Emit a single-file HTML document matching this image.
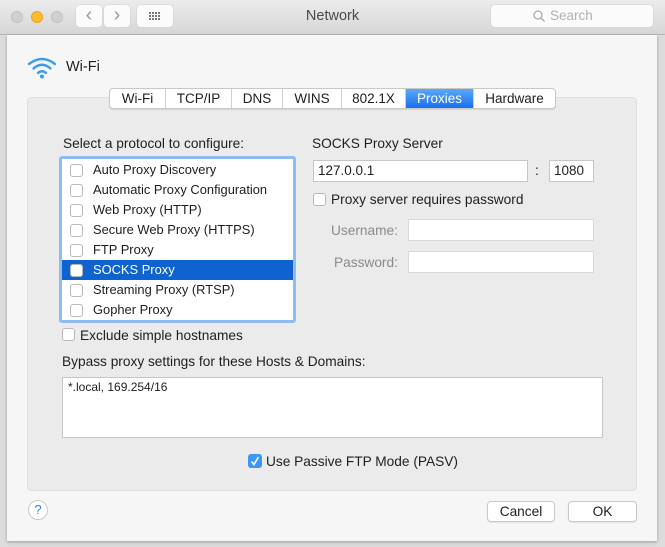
<!DOCTYPE html>
<html><head><meta charset="utf-8"><style>
*{box-sizing:border-box;margin:0;padding:0}
body{width:665px;height:547px;overflow:hidden;background:#dcdcdc;font-family:"Liberation Sans",Arial,sans-serif;font-size:13.7px;color:#1e1e1e;position:relative}
.a{position:absolute}
.tb{left:0;top:0;width:665px;height:35px;background:linear-gradient(#ececec,#d6d6d6);border-bottom:1px solid #b8b8b8}
.dot{width:12px;height:12px;border-radius:50%;top:11px;background:#d0d0d0;border:1px solid #c0c0c0}
.btn{background:#fbfbfb;border-radius:4px;height:22px;top:5px;box-shadow:0 0 0 .5px #d0d0d0}
.sheet{left:7px;top:35px;width:650px;height:506px;background:#f6f6f6;box-shadow:0 1px 3px rgba(0,0,0,.3)}
.panel{left:27px;top:97px;width:610px;height:394px;background:#ebebeb;border:1px solid #e0e0e0;border-radius:4px}
.tabs{left:109px;top:88px;height:21px;display:flex;background:#fff;border:1px solid #c8c8c8;border-radius:4px;box-shadow:0 1px 1px rgba(0,0,0,.1);overflow:hidden}
.tabs div{height:19px;line-height:19px;text-align:center;border-right:1px solid #d0d0d0;font-size:13.5px}
.tabs .s{background:linear-gradient(#5aa8f8,#1a6ff0);color:#fff}
.list{left:59px;top:156px;width:237px;height:167px;background:#fff;border:3px solid #8ebcf0;border-radius:3px}
.row{position:absolute;left:0;width:231px;height:20px;line-height:20px;padding-left:31px;font-size:12.9px}
.cb{position:absolute;width:13px;height:13px;border:1px solid #b8b8b8;border-radius:3px;background:#fff}
.row .cb{left:8px;top:4px}
.sel{background:#0e63d0;color:#fff}
.inp{background:#fff;border:1px solid #c6c6c6;height:22px;line-height:20px;padding-left:4px;font-size:13.5px}
.pb{background:#fff;border:1px solid #c8c8c8;border-radius:4px;height:21px;line-height:19px;text-align:center;box-shadow:0 1px 1px rgba(0,0,0,.08)}
</style></head><body>
<div class="a tb"></div>
<div class="a dot" style="left:11px"></div>
<div class="a dot" style="left:31px;background:#fdbb2e;border-color:#e9a420"></div>
<div class="a dot" style="left:51px"></div>
<div class="a btn" style="left:76px;width:26px;color:#999;text-align:center;line-height:20px;font-size:20px">&#8249;</div>
<div class="a btn" style="left:104px;width:26px;color:#999;text-align:center;line-height:20px;font-size:20px">&#8250;</div>
<div class="a btn" style="left:137px;width:36px"><svg width="36" height="22"><g fill="#777"><rect x="12" y="7" width="2" height="2"/><rect x="15" y="7" width="2" height="2"/><rect x="18" y="7" width="2" height="2"/><rect x="21" y="7" width="2" height="2"/><rect x="12" y="10" width="2" height="2"/><rect x="15" y="10" width="2" height="2"/><rect x="18" y="10" width="2" height="2"/><rect x="21" y="10" width="2" height="2"/><rect x="12" y="13" width="2" height="2"/><rect x="15" y="13" width="2" height="2"/><rect x="18" y="13" width="2" height="2"/><rect x="21" y="13" width="2" height="2"/></g></svg></div>
<div class="a" style="left:0;width:665px;top:8px;text-align:center;color:#4a4a4a;font-size:14.5px">Network</div>
<div class="a btn" style="left:491px;width:162px;color:#b0b0b0;font-size:13.5px;line-height:22px;padding-left:42px"><svg class="a" style="left:42px;top:5px" width="12" height="12"><circle cx="5" cy="5" r="4" fill="none" stroke="#aaa" stroke-width="1.3"/><line x1="8" y1="8" x2="11.5" y2="11.5" stroke="#aaa" stroke-width="1.3"/></svg><span style="margin-left:17px">Search</span></div>

<div class="a sheet"></div>
<svg class="a" style="left:26px;top:55px" width="34" height="25"><g fill="none" stroke="#3a9bf0" stroke-width="2.4" stroke-linecap="round"><path d="M3 9 Q16 -1 29 9"/><path d="M7.5 13.5 Q16 6 24.5 13.5"/><path d="M12 18 Q16 14.5 20 18"/></g><circle cx="16" cy="21.5" r="2" fill="#3a9bf0"/></svg>
<div class="a" style="left:66px;top:59px;font-size:14.5px">Wi-Fi</div>
<div class="a panel"></div>
<div class="a tabs">
<div style="width:56px">Wi-Fi</div><div style="width:66px">TCP/IP</div><div style="width:51px">DNS</div><div style="width:59px">WINS</div><div style="width:64px">802.1X</div><div class="s" style="width:68px">Proxies</div><div style="width:81px;border-right:0">Hardware</div>
</div>

<div class="a" style="left:63px;top:136px">Select a protocol to configure:</div>
<div class="a list">
<div class="row" style="top:1px"><span class="cb"></span>Auto Proxy Discovery</div>
<div class="row" style="top:21px"><span class="cb"></span>Automatic Proxy Configuration</div>
<div class="row" style="top:41px"><span class="cb"></span>Web Proxy (HTTP)</div>
<div class="row" style="top:61px"><span class="cb"></span>Secure Web Proxy (HTTPS)</div>
<div class="row" style="top:81px"><span class="cb"></span>FTP Proxy</div>
<div class="row sel" style="top:101px"><span class="cb"></span>SOCKS Proxy</div>
<div class="row" style="top:121px"><span class="cb"></span>Streaming Proxy (RTSP)</div>
<div class="row" style="top:141px"><span class="cb"></span>Gopher Proxy</div>
</div>
<span class="a cb" style="left:62px;top:328px"></span>
<div class="a" style="left:80px;top:328px">Exclude simple hostnames</div>

<div class="a" style="left:312px;top:136px">SOCKS Proxy Server</div>
<div class="a inp" style="left:313px;top:160px;width:215px">127.0.0.1</div>
<div class="a" style="left:535px;top:163px">:</div>
<div class="a inp" style="left:549px;top:160px;width:45px">1080</div>
<span class="a cb" style="left:313px;top:193px"></span>
<div class="a" style="left:331px;top:192px">Proxy server requires password</div>
<div class="a" style="left:331px;top:223px;color:#8a8a8a">Username:</div>
<div class="a inp" style="left:408px;top:219px;width:186px;border-color:#d8d8d8"></div>
<div class="a" style="left:334px;top:255px;color:#8a8a8a">Password:</div>
<div class="a inp" style="left:408px;top:251px;width:186px;border-color:#d8d8d8"></div>

<div class="a" style="left:62px;top:354px">Bypass proxy settings for these Hosts &amp; Domains:</div>
<div class="a" style="left:62px;top:377px;width:541px;height:61px;background:#fff;border:1px solid #c6c6c6;font-size:12px;padding:2px 5px">*.local, 169.254/16</div>

<div class="a" style="left:248px;top:454px;width:14px;height:14px;border-radius:3px;background:#3e95f4"><svg width="14" height="14"><path d="M3.5 7.5 L6 10.5 L10.5 3" fill="none" stroke="#fff" stroke-width="1.6"/></svg></div>
<div class="a" style="left:266px;top:454px">Use Passive FTP Mode (PASV)</div>

<div class="a" style="left:28px;top:500px;width:20px;height:20px;border-radius:50%;background:#fff;border:1px solid #c8c8c8;color:#2a7ef0;text-align:center;line-height:18px;font-size:13px">?</div>
<div class="a pb" style="left:487px;top:501px;width:68px">Cancel</div>
<div class="a pb" style="left:568px;top:501px;width:69px">OK</div>
</body></html>
